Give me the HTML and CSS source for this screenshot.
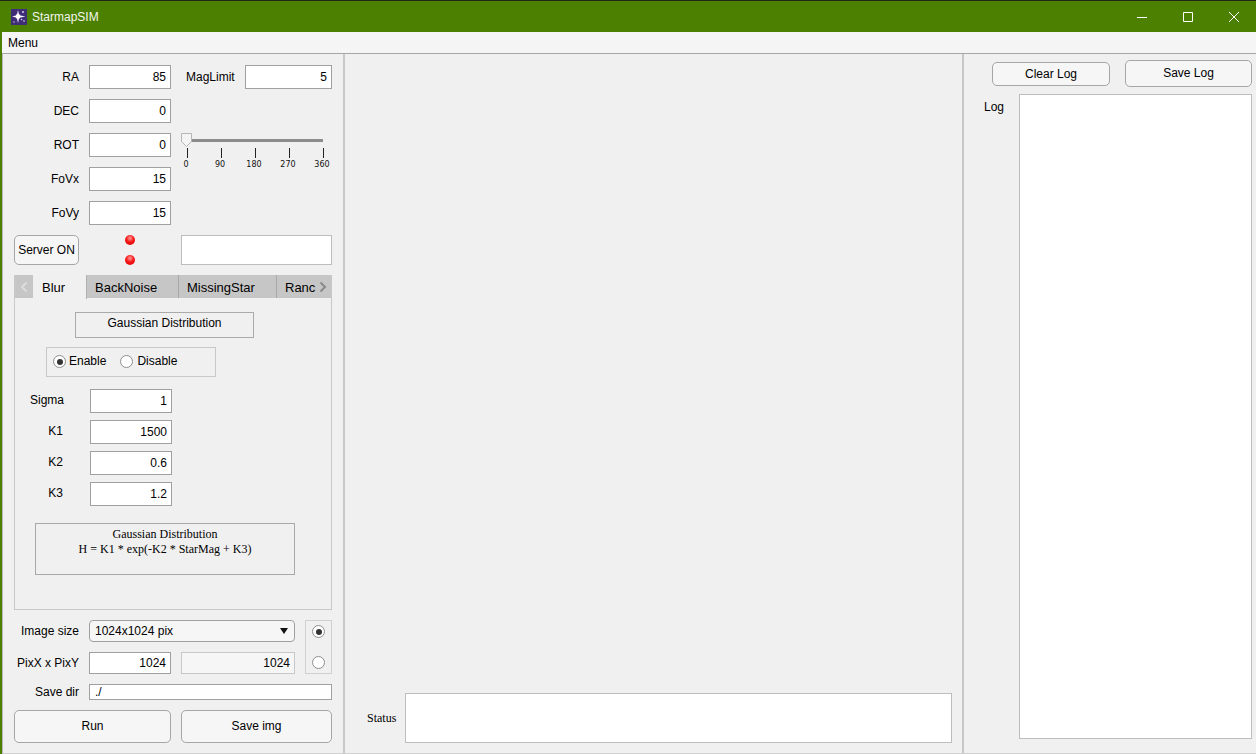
FILE: index.html
```html
<!DOCTYPE html>
<html lang="en">
<head>
<meta charset="utf-8">
<title>StarmapSIM</title>
<link rel="stylesheet" href="styles.css">
</head>
<body>
<div class="window">
  <header class="titlebar">
    <svg class="app-icon" viewBox="0 0 16 16" aria-hidden="true">
      <rect width="16" height="16" fill="#3f2d78"/>
      <path d="M7 1 8.200 6.300 14.500 7.500 8.200 8.700 7 14 5.800 8.700 1 7.500 5.800 6.300z" fill="#f6f3ff"/>
      <circle cx="7" cy="7.500" r="2.400" fill="#fff"/>
      <circle cx="12" cy="3" r=".9" fill="#e4def8"/>
      <circle cx="13" cy="12" r=".8" fill="#e8e4f8"/>
      <circle cx="3" cy="13" r=".7" fill="#cfc6ee"/>
      <circle cx="10.500" cy="10.500" r=".8" fill="#d8d0f2"/>
    </svg>
    <span class="app-title">StarmapSIM</span>
    <div class="win-controls">
      <span class="win-btn"><svg viewBox="0 0 10 10"><path d="M0 5.500h10" /></svg></span>
      <span class="win-btn"><svg viewBox="0 0 10 10"><path d="M.5.500h9v9h-9z" /></svg></span>
      <span class="win-btn"><svg viewBox="0 0 10 10"><path d="M0 0l10 10M10 0L0 10" /></svg></span>
    </div>
  </header>
  <nav class="menubar"><span>Menu</span></nav>
  <main class="main">
    <section class="left">
      <div class="form-top">
        <div class="label">RA</div>
        <div class="field">85</div>
        <div class="maglimit"><span>MagLimit</span><div class="field field-mag">5</div></div>

        <div class="label">DEC</div>
        <div class="field">0</div>

        <div class="label">ROT</div>
        <div class="field">0</div>
        <div class="slider">
          <div class="track"></div>
          <svg class="thumb" viewBox="0 0 11 14"><path d="M.500.500h10v8l-5 5-5-5z" fill="#f4f4f4" stroke="#b5b5b5"/></svg>
          <div class="ticks">
            <div class="tick"><i></i><span>0</span></div>
            <div class="tick"><i></i><span>90</span></div>
            <div class="tick"><i></i><span>180</span></div>
            <div class="tick"><i></i><span>270</span></div>
            <div class="tick"><i></i><span>360</span></div>
          </div>
        </div>

        <div class="label">FoVx</div>
        <div class="field">15</div>

        <div class="label">FoVy</div>
        <div class="field">15</div>

        <div class="btn btn-server">Server ON</div>
        <div class="leds"><i class="led"></i><i class="led"></i></div>
        <div class="server-box"></div>
      </div>

      <div class="tabs">
        <div class="tabstrip">
          <div class="tab-arrow"><svg viewBox="0 0 8 12"><path d="M6.500 1.500 2 6l4.500 4.500" /></svg></div>
          <div class="tab active">Blur</div>
          <div class="tab tab-b">BackNoise</div>
          <div class="tab tab-m">MissingStar</div>
          <div class="tab tab-r"><span>Ranc</span><svg viewBox="0 0 8 12"><path d="M1.500 1.500 6 6l-4.500 4.500" /></svg></div>
        </div>
        <div class="tab-body">
          <div class="dist-title">Gaussian Distribution</div>
          <div class="radio-group">
            <i class="radio on"></i><span class="radio-text">Enable</span>
            <i class="radio radio-second"></i><span class="radio-text radio-text-second">Disable</span>
          </div>
          <div class="params">
            <div class="param-label">Sigma</div><div class="field">1</div>
            <div class="param-label param-k">K1</div><div class="field">1500</div>
            <div class="param-label param-k">K2</div><div class="field">0.6</div>
            <div class="param-label param-k">K3</div><div class="field">1.2</div>
          </div>
          <div class="formula">Gaussian Distribution<br>H = K1 * exp(-K2 * StarMag + K3)</div>
        </div>
      </div>

      <div class="form-image">
        <div class="label">Image size</div>
        <div class="select"><span>1024x1024 pix</span><i class="caret"></i></div>
        <div class="radio-col"><i class="radio on"></i><i class="radio"></i></div>
        <div class="label">PixX x PixY</div>
        <div class="field">1024</div>
        <div class="field field-off">1024</div>
      </div>

      <div class="savedir">
        <div class="label">Save dir</div>
        <div class="dir-field">./</div>
      </div>

      <div class="actions">
        <div class="btn btn-run">Run</div>
        <div class="btn btn-save">Save img</div>
      </div>
    </section>

    <section class="center">
      <div class="status">
        <span class="status-label">Status</span>
        <div class="status-box"></div>
      </div>
    </section>

    <section class="right">
      <div class="log-actions">
        <div class="btn btn-clear">Clear Log</div>
        <div class="btn btn-savelog">Save Log</div>
      </div>
      <div class="log-row">
        <span class="log-label">Log</span>
        <div class="log-box"></div>
      </div>
    </section>
  </main>
</div>
</body>
</html>
```

FILE: styles.css
```css
* { box-sizing: border-box; }
html, body { margin: 0; padding: 0; }
body {
  width: 1256px;
  height: 754px;
  overflow: hidden;
  font-family: "Liberation Sans", Arial, sans-serif;
  font-size: 12px;
  color: #000;
  background: #f0f0f0;
}
.window {
  width: 1256px;
  height: 754px;
  display: flex;
  flex-direction: column;
  border-left: 2px solid #4c8000;
}
.titlebar {
  height: 32px;
  margin-left: -2px;
  padding-left: 11px;
  display: flex;
  align-items: center;
  background: #4c8000;
  border-top: 1px solid #20261c;
  color: #f2f6ee;
}
.app-icon { width: 16px; height: 16px; display: block; }
.app-title { margin-left: 5px; font-size: 12px; }
.win-controls { margin-left: auto; margin-right: -1px; display: flex; }
.win-btn { width: 46px; height: 31px; display: flex; align-items: center; justify-content: center; }
.win-btn svg { width: 10px; height: 10px; display: block; overflow: visible; }
.win-btn path { fill: none; stroke: #fff; stroke-width: 1; }

.menubar {
  height: 22px;
  padding-left: 6px;
  display: flex;
  align-items: center;
  background: #f5f5f5;
  border-bottom: 1px solid #a6a6a6;
}
.main { flex: 1; display: flex; min-height: 0; border-left: 1px solid #b8b8b8; border-bottom: 1px solid #d0d0d0; }

.left {
  width: 342px;
  padding: 11px 11px 0;
  border-right: 2px solid #c8c8c8;
  background: #f0f0f0;
}
.form-top {
  display: grid;
  grid-template-columns: 65px 82px 151px;
  grid-template-rows: 24px 24px 24px 24px 24px 30px;
  column-gap: 10px;
  row-gap: 10px;
  align-items: center;
}
.form-top > .label { grid-column: 1; }
.form-top > .field { grid-column: 2; }
.label { text-align: right; white-space: nowrap; }
.field {
  height: 24px;
  padding-right: 4px;
  display: flex;
  align-items: center;
  justify-content: flex-end;
  background: #fff;
  border: 1px solid #a0a0a0;
}
.maglimit { grid-column: 3; display: flex; align-items: center; padding-left: 5px; }
.field-mag { width: 87px; margin-left: auto; }
.slider {
  grid-column: 3;
  grid-row: 3 / span 2;
  align-self: start;
  height: 40px;
  position: relative;
}
.track {
  position: absolute;
  left: 6px;
  right: 9px;
  top: 6px;
  height: 3px;
  background: #8c8c8c;
}
.thumb { position: absolute; left: 0; top: 0; width: 11px; height: 14px; }
.ticks {
  position: absolute;
  left: -10px;
  top: 15px;
  width: 166px;
  display: flex;
  justify-content: space-between;
}
.tick { width: 30px; display: flex; flex-direction: column; align-items: center; }
.tick i { width: 1px; height: 10px; background: #222; display: block; margin-left: 3px; }
.tick span { font-family: "DejaVu Sans", sans-serif; font-size: 8px; line-height: 10px; margin-top: 2px; color: #111; }
.btn {
  display: flex;
  align-items: center;
  justify-content: center;
  background: #f6f6f6;
  border: 1px solid #a6a6a6;
  border-radius: 5px;
  white-space: nowrap;
}
.btn-server { grid-column: 1; grid-row: 6; height: 30px; }
.leds { grid-column: 2; grid-row: 6; height: 30px; display: flex; flex-direction: column; justify-content: space-between; align-items: center; margin-left: -1px; }
.led {
  width: 10px;
  height: 10px;
  border-radius: 50%;
  background: radial-gradient(circle at 50% 32%, #ff9a9a 0, #f81818 45%, #d80000 100%);
  display: block;
}
.server-box { grid-column: 3; grid-row: 6; height: 30px; background: #fff; border: 1px solid #bdbdbd; }

.tabs {
  height: 335px;
  width: 318px;
  margin-top: 10px;
  border: 1px solid #c8c8c8;
  border-top: 0;
  display: flex;
  flex-direction: column;
}
.tabstrip {
  height: 23px;
  display: flex;
  background: #c6c6c6;
  font-size: 13px;
  flex: none;
}
.tab-arrow { width: 18px; display: flex; align-items: center; justify-content: center; }
.tab-arrow svg, .tab-r svg { width: 8px; height: 12px; flex: none; }
.tab-arrow path { fill: none; stroke: #dcdcdc; stroke-width: 2; }
.tab-r path { fill: none; stroke: #8a8a8a; stroke-width: 2; }
.tab {
  display: flex;
  align-items: center;
  padding: 1px 0 0 8px;
  border-right: 1px solid #a8a8a8;
  white-space: nowrap;
}
.tab.active { width: 54px; height: 24px; padding-left: 9px; padding-top: 0; background: #f0f0f0; border-right: 1px solid #b0b0b0; }
.tab-b { width: 92px; }
.tab-m { width: 98px; }
.tab-r { flex: 1; border-right: 0; padding-right: 4px; justify-content: space-between; }
.tab-body { flex: 1; padding-top: 14px; }
.dist-title {
  width: 179px;
  height: 26px;
  margin-left: 60px;
  padding-top: 3px;
  text-align: center;
  border: 1px solid #aaa;
  line-height: 15px;
}
.radio-group {
  width: 170px;
  height: 30px;
  margin: 9px 0 0 31px;
  padding: 0 0 1px 6px;
  display: flex;
  align-items: center;
  border: 1px solid #c8c8c8;
}
.radio {
  width: 13px;
  height: 13px;
  border-radius: 50%;
  background: #fff;
  border: 1px solid #8e8e8e;
  display: flex;
  align-items: center;
  justify-content: center;
  flex: none;
}
.radio.on::after { content: ""; width: 6px; height: 6px; border-radius: 50%; background: #333; display: block; }
.radio-text { margin: 0 0 2px 3px; }
.radio-text-second { margin-left: 4px; }
.radio-second { margin-left: 14px; }
.params {
  margin: 12px 0 0 15px;
  display: grid;
  grid-template-columns: 34px 82px;
  column-gap: 26px;
  row-gap: 7px;
  align-items: center;
}
.param-label { text-align: right; margin-top: -3px; }
.param-k { padding-right: 1px; }
.formula {
  width: 260px;
  height: 52px;
  margin: 17px 0 0 20px;
  padding-top: 3px;
  text-align: center;
  font-family: "Liberation Serif", "Times New Roman", serif;
  line-height: 15px;
  border: 1px solid #a8a8a8;
}

.form-image {
  margin-top: 10px;
  display: grid;
  grid-template-columns: 65px 82px 114px 27px;
  grid-template-rows: 22px 22px;
  column-gap: 10px;
  row-gap: 10px;
  align-items: center;
}
.form-image .field { height: 22px; }
.select {
  grid-column: 2 / span 2;
  height: 22px;
  padding: 0 6px 0 5px;
  display: flex;
  align-items: center;
  justify-content: space-between;
  background: #f6f6f6;
  border: 1px solid #a0a0a0;
  border-radius: 4px;
}
.caret { width: 0; height: 0; border-left: 4px solid transparent; border-right: 4px solid transparent; border-top: 6px solid #111; display: block; }
.radio-col {
  grid-column: 4;
  grid-row: 1 / span 2;
  height: 54px;
  display: flex;
  flex-direction: column;
  align-items: center;
  justify-content: space-between;
  padding: 4px 0 4px;
  border: 1px solid #d0d0d0;
}
.field-off { background: #f6f6f6; border-color: #c8c8c8; }
.savedir {
  margin-top: 10px;
  display: grid;
  grid-template-columns: 65px 243px;
  column-gap: 10px;
  align-items: center;
}
.dir-field { height: 16px; padding-left: 5px; line-height: 14px; background: #fff; border: 1px solid #a0a0a0; }
.actions { margin-top: 10px; display: flex; gap: 10px; }
.btn-run { width: 157px; height: 33px; padding-bottom: 2px; }
.btn-save { width: 151px; height: 33px; padding-bottom: 2px; }

.center {
  width: 619px;
  padding: 0 10px 10px 22px;
  border-right: 2px solid #c8c8c8;
  display: flex;
  flex-direction: column;
  justify-content: flex-end;
}
.status { display: flex; align-items: center; }
.status-label { width: 28px; margin-right: 10px; font-family: "Liberation Serif", "Times New Roman", serif; white-space: nowrap; }
.status-box { flex: 1; height: 50px; background: #fff; border: 1px solid #bdbdbd; }

.right { flex: 1; padding: 6px 4px 14px 0; display: flex; flex-direction: column; min-width: 0; }
.log-actions { display: flex; align-items: flex-start; }
.btn-clear { width: 118px; height: 24px; margin: 2px 0 0 28px; }
.btn-savelog { width: 127px; height: 27px; margin-left: 15px; padding-bottom: 2px; }
.log-row { flex: 1; margin-top: 7px; display: flex; align-items: flex-start; min-height: 0; }
.log-label { width: 20px; margin: 6px 15px 0 20px; }
.log-box { flex: 1; height: 100%; background: #fff; border: 1px solid #bdbdbd; }
```
